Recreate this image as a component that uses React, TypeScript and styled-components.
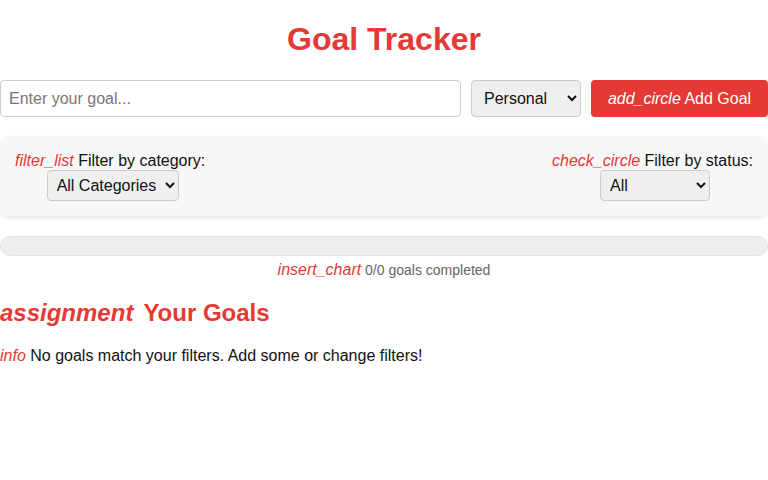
import styled, { createGlobalStyle } from "styled-components";

const GlobalStyle = createGlobalStyle`
    body {
        margin: 0;
        font-family: "Liberation Sans", Arial, sans-serif;
        background: #fff;
        color: #111;
    }
`;

const Page = styled.div`
    width: 768px;
`;

const Title = styled.h1`
    text-align: center;
    color: #e53935;
    font-size: 32px;
    margin: 21px 0 22px;
    line-height: 37px;
`;

const Icon = styled.i`
    color: #e53935;
    font-style: italic;
    font-size: 16px;
`;

const InputRow = styled.div`
    display: flex;
    gap: 10px;
`;

const GoalInput = styled.input`
    flex: 1;
    height: 37px;
    box-sizing: border-box;
    padding: 8px;
    font-size: 16px;
    font-family: inherit;
    border: 1px solid #ccc;
    border-radius: 4px;
    &::placeholder {
        color: #777;
    }
`;

const Select = styled.select<{ $w: number; $h: number; $pl: number; $ml?: number }>`
    width: ${(p) => p.$w}px;
    height: ${(p) => p.$h}px;
    margin-left: ${(p) => p.$ml ?? 0}px;
    box-sizing: border-box;
    font-size: 16px;
    font-family: inherit;
    padding: 0 2px 0 ${(p) => p.$pl}px;
    border: 1px solid #ccc;
    border-radius: 4px;
    background: #efefef;
    color: #111;
`;

const AddButton = styled.button`
    width: 177px;
    height: 37px;
    border: none;
    border-radius: 4px;
    background: #e53935;
    color: #fff;
    font-size: 16px;
    font-family: inherit;
    ${Icon} {
        color: #fff;
    }
`;

const FilterPanel = styled.div`
    margin-top: 20px;
    display: flex;
    justify-content: space-between;
    padding: 15px;
    background: #f7f7f7;
    border-radius: 8px;
    box-shadow: 0 2px 5px rgba(0, 0, 0, 0.1);
`;

const FilterGroup = styled.div`
    display: flex;
    flex-direction: column;
    align-items: center;
`;

const FilterLabel = styled.label`
    font-size: 16px;
    line-height: 18px;
`;

const ProgressBar = styled.div`
    margin-top: 20px;
    height: 20px;
    box-sizing: border-box;
    border-radius: 10px;
    background: #eee;
    border: 1px solid #e4e4e4;
`;

const ProgressText = styled.div`
    margin-top: 5px;
    text-align: center;
    font-size: 14px;
    color: #666;
    line-height: 18px;
`;

const SectionTitle = styled.h2`
    display: flex;
    gap: 10px;
    align-items: center;
    color: #e53935;
    font-size: 24px;
    line-height: 28px;
    margin: 20px 0;
    ${Icon} {
        font-size: 24px;
    }
`;

const Empty = styled.p`
    margin: 0;
    font-size: 16px;
    line-height: 18px;
`;

export default function App() {
    return (
        <Page>
            <GlobalStyle />
            <Title>Goal Tracker</Title>
            <InputRow>
                <GoalInput placeholder="Enter your goal..." />
                <Select $w={110} $h={37} $pl={8} defaultValue="Personal">
                    <option>Personal</option>
                    <option>Work</option>
                    <option>Health</option>
                </Select>
                <AddButton>
                    <Icon>add_circle</Icon> Add Goal
                </AddButton>
            </InputRow>
            <FilterPanel>
                <FilterGroup>
                    <FilterLabel>
                        <Icon>filter_list</Icon> Filter by category:
                    </FilterLabel>
                    <Select $w={132} $h={31} $pl={5} $ml={5}>
                        <option>All Categories</option>
                    </Select>
                </FilterGroup>
                <FilterGroup>
                    <FilterLabel>
                        <Icon>check_circle</Icon> Filter by status:
                    </FilterLabel>
                    <Select $w={110} $h={31} $pl={5} $ml={5}>
                        <option>All</option>
                    </Select>
                </FilterGroup>
            </FilterPanel>
            <ProgressBar />
            <ProgressText>
                <Icon>insert_chart</Icon> 0/0 goals completed
            </ProgressText>
            <SectionTitle>
                <Icon>assignment</Icon> Your Goals
            </SectionTitle>
            <Empty>
                <Icon>info</Icon> No goals match your filters. Add some or change filters!
            </Empty>
        </Page>
    );
}
